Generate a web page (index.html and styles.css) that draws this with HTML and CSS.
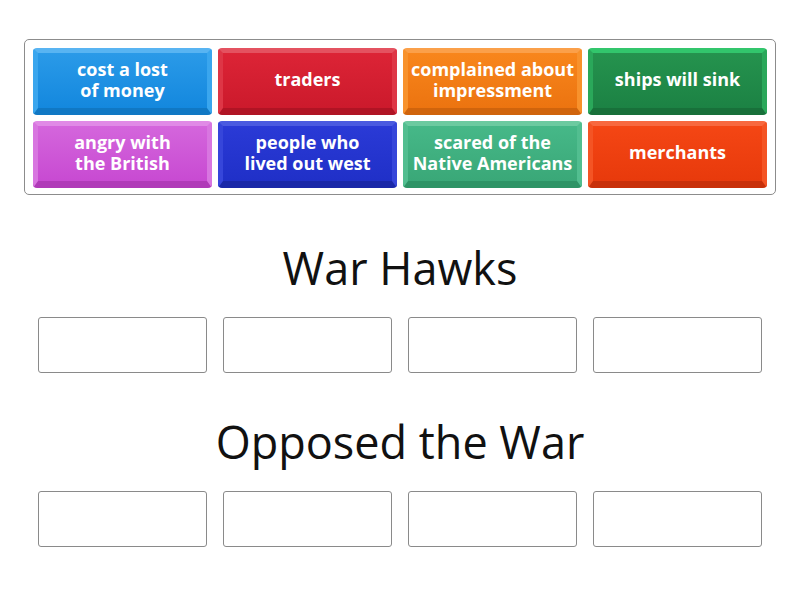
FILE: index.html
```html
<!DOCTYPE html>
<html lang="en">
<head>
    <meta charset="utf-8"/>
    <meta name="viewport" content="width=device-width, initial-scale=1"/>
    <title>War Hawks vs Opposed the War</title>
    <link rel="stylesheet" href="styles.css">
</head>
<body>
    <div class="page">
        <!-- Cards to sort -->
        <div class="bank">
            <div class="card blue">cost a lost<br>of money</div>
            <div class="card red">traders</div>
            <div class="card orange">complained about<br>impressment</div>
            <div class="card green">ships will sink</div>
            <div class="card pink">angry with<br>the British</div>
            <div class="card indigo">people who<br>lived out west</div>
            <div class="card teal">scared of the<br>Native Americans</div>
            <div class="card flame">merchants</div>
        </div>

        <!-- Groups -->
        <h2 class="group-title first">War Hawks</h2>
        <div class="slots">
            <div class="slot"></div>
            <div class="slot"></div>
            <div class="slot"></div>
            <div class="slot"></div>
        </div>

        <h2 class="group-title">Opposed the War</h2>
        <div class="slots">
            <div class="slot"></div>
            <div class="slot"></div>
            <div class="slot"></div>
            <div class="slot"></div>
        </div>
    </div>
</body>
</html>
```
FILE: styles.css
```css
html, body {
    margin: 0;
    padding: 0;
    background: #fff;
}
body {
    font-family: "Open Sans", "Noto Sans", sans-serif;
}
.page {
    padding: 39px 24px 0 24px;
}
.bank {
    display: grid;
    grid-template-columns: repeat(4, 179px);
    grid-auto-rows: 67px;
    gap: 6px;
    padding: 8px 8px 6px 8px;
    border: 1px solid #8c8c8c;
    border-radius: 5px;
}
.card {
    box-sizing: border-box;
    display: flex;
    align-items: center;
    justify-content: center;
    text-align: center;
    color: #fff;
    font-weight: 700;
    font-size: 18px;
    line-height: 21px;
    border-radius: 4px;
    border-style: solid;
    border-width: 5px 5px 7px 5px;
    padding-bottom: 2px;
}
.blue   { background: linear-gradient(#2a9ae8, #1488de); border-color: #58b4f2 #3aa6ee #1078c4 #3aa6ee; }
.red    { background: linear-gradient(#dc2436, #cc1a2c); border-color: #e45260 #de3646 #b01424 #de3646; }
.orange { background: linear-gradient(#f8861c, #ec7410); border-color: #fba04a #f8922c #d0640c #f8922c; }
.green  { background: linear-gradient(#25934e, #1c8244); border-color: #32c66c #2aa85a #18703a #2aa85a; }
.pink   { background: linear-gradient(#d466dc, #c84ad2); border-color: #e08ae6 #d876e0 #b03ab8 #d876e0; }
.indigo { background: linear-gradient(#2a3ad6, #2030c8); border-color: #4a5ae0 #3646da #1a28a8 #3646da; }
.teal   { background: linear-gradient(#46b888, #3aa878); border-color: #6ccaa0 #52be90 #2e9466 #52be90; }
.flame  { background: linear-gradient(#f44614, #e83a0c); border-color: #f8683e #f45424 #c8300a #f45424; }

.group-title {
    margin: 43px 0 19px 0;
    text-align: center;
    font-weight: 400;
    font-size: 45px;
    line-height: 60px;
    color: #111;
}
.slots + .group-title {
    margin-top: 39px;
}
.slots {
    display: flex;
    justify-content: center;
    gap: 16px;
}
.slot {
    box-sizing: border-box;
    width: 169px;
    height: 56px;
    border: 1px solid #8a8a8a;
    border-radius: 3px;
}
```
